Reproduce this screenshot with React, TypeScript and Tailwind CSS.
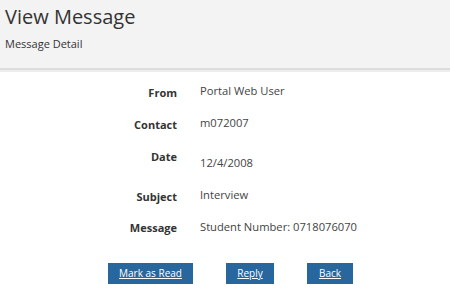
export default function App() {
  const font = { fontFamily: '"Open Sans", "Noto Sans", sans-serif' };

  return (
    <div className="w-[450px] h-[296px] bg-white text-[#333]" style={font}>
      <header className="h-[68px] bg-[#f3f3f3] pl-[5px] pt-[7px] shadow-[0_2px_0_#dcdcdc,0_4px_0_#ededed]">
        <h1 className="text-[20px] leading-[20px] text-[#333]">View Message</h1>
        <p className="mt-[11px] text-[11px] leading-[11px] text-[#333]">Message Detail</p>
      </header>

      <main className="pt-[17px] text-[11.2px] leading-[11px]">
        <div className="flex h-[32px]">
          <span className="w-[177px] pt-[2px] text-right text-[11px] font-bold text-[#333]">From</span>
          <span className="ml-[23px] text-[#444]">Portal Web User</span>
        </div>
        <div className="flex h-[34px]">
          <span className="w-[177px] pt-[2px] text-right text-[11px] font-bold text-[#333]">Contact</span>
          <span className="ml-[23px] text-[#444]">m072007</span>
        </div>
        <div className="flex h-[38px]">
          <span className="w-[177px] text-right text-[11px] font-bold text-[#333]">Date</span>
          <span className="ml-[23px] pt-[6px] text-[#444]">12/4/2008</span>
        </div>
        <div className="flex h-[32px]">
          <span className="w-[177px] pt-[2px] text-right text-[11px] font-bold text-[#333]">Subject</span>
          <span className="ml-[23px] text-[#444]">Interview</span>
        </div>
        <div className="flex h-[42px]">
          <span className="w-[177px] pt-[1px] text-right text-[11px] font-bold text-[#333]">Message</span>
          <span className="ml-[23px] text-[#444]">Student Number: 0718076070</span>
        </div>

        <div className="flex gap-[33px] pl-[108px]">
          <button className="flex h-[21px] w-[85px] items-center justify-center bg-[#28679e] text-[10px] text-white underline">
            Mark as Read
          </button>
          <button className="flex h-[21px] w-[48px] items-center justify-center bg-[#28679e] text-[10px] text-white underline">
            Reply
          </button>
          <button className="flex h-[21px] w-[46px] items-center justify-center bg-[#28679e] text-[10px] text-white underline">
            Back
          </button>
        </div>
      </main>
    </div>
  );
}
